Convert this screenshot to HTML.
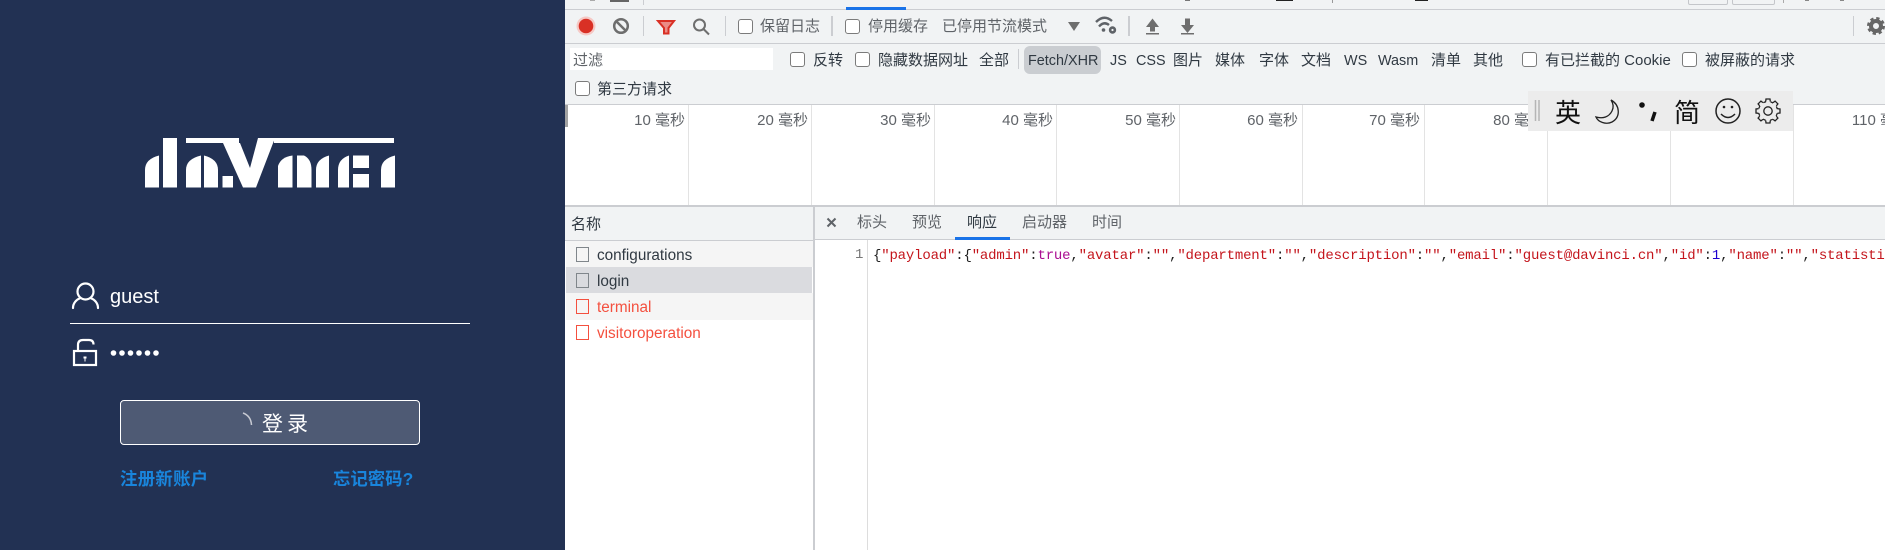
<!DOCTYPE html>
<html lang="zh"><head><meta charset="utf-8"><title>davinci</title>
<style>
html,body{margin:0;padding:0;width:1885px;height:550px;overflow:hidden;background:#fff}
body{position:relative;font-family:"Liberation Sans","Noto Sans CJK SC",sans-serif}
.a,.t,.r,.c{position:absolute;display:block}
.t,.r,.c{white-space:nowrap;font-size:15px;line-height:20px;height:20px;color:#303942}
.l{font-size:14.4px}
.n{font-size:15.3px}
.r{text-align:right;color:#5f6368;width:80px;top:111px}
.g{color:#5f6368}
.c{width:13px;height:13px;border:1.300px solid #7b7b7b;border-radius:3px;background:#fff;box-sizing:content-box}
svg{position:absolute;left:0;top:0;overflow:visible}
.line{position:absolute;top:105px;width:1px;height:100px;background:#e3e3e3}
pre{position:absolute;margin:0;left:873px;top:247px;font:14px/18px "Liberation Mono",monospace;letter-spacing:-.18px;color:#222;white-space:pre}
pre b{font-weight:normal;color:#c4151c}pre i{font-style:normal;color:#aa0d91}pre u{text-decoration:none;color:#1c00cf}
</style></head><body>

<!-- left login panel -->
<div class="a" style="left:0;top:0;width:565px;height:550px;background:#223153"></div>
<div class="a" style="left:120px;top:400px;width:298px;height:43px;border:1px solid #fff;border-radius:4px;background:#4e5a74"></div>
<svg width="565" height="550" viewBox="0 0 565 550">
<g fill="#fff">
<path d="M145 187.500V170Q145 159 159 155.500V187.500Z"/>
<rect x="163" y="138" width="14" height="49.500"/>
<rect x="186" y="138" width="53" height="5"/>
<path d="M186 187.500V170Q186 159 201 155.500V187.500Z"/>
<path d="M204 187.500V155.500Q218 159 218 170V187.500Z"/>
<rect x="222.500" y="176" width="10.500" height="11.500"/>
<path d="M223 143H240L250 168L258 138H275L256 187.500H243Z"/>
<rect x="274" y="138" width="120" height="5"/>
<path d="M278 187.500V166Q281 157 292.500 155.500V187.500Z"/>
<path d="M297 187.500V155.500H304Q311.500 159 311.500 170V187.500Z"/>
<path d="M316 187.500V170Q316 159 329 155.500V187.500Z"/>
<path d="M338 187.500V170Q338 159 349 155.500V187.500Z"/>
<path d="M353 155.500H369V168H353ZM353 174H369V187.500H353Z"/>
<path d="M381 187.500V170Q381 159 395 155.500V187.500Z"/>
</g>
<g fill="none" stroke="#fff" stroke-width="2.200">
<circle cx="85.500" cy="291.500" r="8"/>
<path d="M73 308C73 303 76.500 299.500 80.500 298M98 308C98 303 94.500 299.500 90.500 298" stroke-linecap="round"/>
<rect x="74" y="351" width="22" height="14"/>
<path d="M78 351V345Q78 340 83 340H89Q93.500 340 93.500 344.500"/>
</g>
<path d="M83.500 356.500h3v2h-1v3h-1v-3h-1z" fill="#fff"/>
<g fill="#fff"><circle cx="113.500" cy="353" r="2.800"/><circle cx="122" cy="353" r="2.800"/><circle cx="130.500" cy="353" r="2.800"/><circle cx="139" cy="353" r="2.800"/><circle cx="147.500" cy="353" r="2.800"/><circle cx="156" cy="353" r="2.800"/></g>
<rect x="70" y="323" width="400" height="1" fill="#fff"/>
<path d="M243 413Q251 416 251.500 425" fill="none" stroke="#c6c9d2" stroke-width="1.500"/>
</svg>
<span class="t" style="left:110px;top:286px;font-size:20px;line-height:22px;height:22px;color:#fff">guest</span>
<span class="t" style="left:262px;top:413px;font-size:21px;line-height:24px;height:24px;color:#fff;letter-spacing:4px">登录</span>
<span class="t" style="left:120px;top:468px;font-size:17.400px;line-height:22px;height:22px;color:#1985dc;font-weight:bold;letter-spacing:.3px">注册新账户</span>
<span class="t" style="left:333px;top:468px;font-size:17.400px;line-height:22px;height:22px;color:#1985dc;font-weight:bold">忘记密码?</span>

<!-- devtools chrome -->
<div class="a" style="left:565px;top:0;width:1320px;height:105px;background:#f1f3f4"></div>
<div class="a" style="left:565px;top:9px;width:1320px;height:1px;background:#cbcdd1"></div>
<div class="a" style="left:846px;top:7px;width:60px;height:3px;background:#1a73e8"></div>
<div class="a" style="left:565px;top:43px;width:1320px;height:1px;background:#cbcdd1"></div>
<div class="a" style="left:565px;top:104px;width:1320px;height:1px;background:#cbcdd1"></div>

<!-- clipped top strip bits -->
<div class="a" style="left:610px;top:0;width:19px;height:2px;background:#666"></div>
<div class="a" style="left:590px;top:0;width:5px;height:1px;background:#aaa"></div>
<div class="a" style="left:643px;top:0;width:1px;height:5px;background:#cbcdd1"></div>
<div class="a" style="left:1185px;top:0;width:5px;height:1px;background:#777"></div>
<div class="a" style="left:1276px;top:0;width:17px;height:1px;background:#222"></div>
<div class="a" style="left:1332px;top:0;width:1px;height:3px;background:#999"></div>
<div class="a" style="left:1415px;top:0;width:13px;height:1px;background:#222"></div>
<div class="a" style="left:1688px;top:-3px;width:38px;height:6px;border:1px solid #c4c6ca;border-radius:2px"></div>
<div class="a" style="left:1732px;top:-3px;width:41px;height:6px;border:1px solid #c4c6ca;border-radius:2px"></div>
<div class="a" style="left:1783px;top:0;width:1px;height:3px;background:#aaa"></div>
<div class="a" style="left:1805px;top:0;width:4px;height:1px;background:#888"></div>
<div class="a" style="left:1840px;top:0;width:4px;height:1px;background:#888"></div>

<!-- toolbar dividers -->
<div class="a" style="left:643px;top:16px;width:1px;height:20px;background:#cbcdd1"></div>
<div class="a" style="left:725px;top:16px;width:1px;height:20px;background:#cbcdd1"></div>
<div class="a" style="left:831px;top:16px;width:2px;height:20px;background:#cbcdd1"></div>
<div class="a" style="left:1128px;top:16px;width:2px;height:20px;background:#cbcdd1"></div>
<div class="a" style="left:1853px;top:16px;width:1px;height:20px;background:#cbcdd1"></div>

<!-- toolbar icons -->
<svg width="1885" height="550" viewBox="0 0 1885 550" style="z-index:2">
<circle cx="586" cy="26" r="9.500" fill="#f6c9c5"/><circle cx="586" cy="26" r="7.300" fill="#d93025"/>
<g fill="none" stroke="#6e6e6e" stroke-width="2.500"><circle cx="621" cy="26" r="6.800"/><path d="M616.500 21.500L625.500 30.500"/></g>
<path d="M658 21H674L668.500 28V33.500H664V28Z" fill="#eb8c86" stroke="#d93025" stroke-width="2"/>
<g fill="none" stroke="#6e6e6e" stroke-width="2"><circle cx="699.500" cy="25" r="5.500"/><path d="M703.500 29L709 34.500"/></g>
<path d="M1068 22H1080L1074 31Z" fill="#6e6e6e"/>
<g fill="none" stroke="#5f6368" stroke-width="2.400"><path d="M1096 22Q1104 14 1112 21"/><path d="M1099 26.500Q1104 21 1109 25"/></g>
<circle cx="1103.500" cy="30" r="1.800" fill="#5f6368"/>
<circle cx="1112.500" cy="30" r="2.400" fill="none" stroke="#5f6368" stroke-width="2.600"/>
<path d="M1146 27L1152.500 18.500L1159 27H1155V31.500H1150V27Z" fill="#6e6e6e"/><rect x="1146" y="33" width="13" height="1.500" fill="#6e6e6e"/>
<path d="M1181 25L1187.500 33L1194 25H1190V18.500H1185V25Z" fill="#6e6e6e"/><rect x="1181" y="33" width="13" height="1.500" fill="#6e6e6e"/>
<g fill="none" stroke="#666"><circle cx="1876" cy="26" r="5" stroke-width="4"/><circle cx="1876" cy="26" r="7.500" stroke-width="3" stroke-dasharray="3.200 2.690"/></g>
</svg>

<!-- toolbar text -->
<span class="c" style="left:738px;top:19px"></span><span class="t g" style="left:760px;top:17px">保留日志</span>
<span class="c" style="left:845px;top:19px"></span><span class="t g" style="left:868px;top:17px">停用缓存</span>
<span class="t g" style="left:942px;top:17px">已停用节流模式</span>

<!-- filter row -->
<div class="a" style="left:570px;top:48px;width:203px;height:22px;background:#fff"></div>
<span class="t g" style="left:573px;top:51px">过滤</span>
<span class="c" style="left:790px;top:52px"></span><span class="t" style="left:813px;top:51px">反转</span>
<span class="c" style="left:855px;top:52px"></span><span class="t" style="left:878px;top:51px">隐藏数据网址</span>
<span class="t" style="left:979px;top:51px">全部</span>
<div class="a" style="left:1018px;top:49px;width:1px;height:20px;background:#cbcdd1"></div>
<div class="a" style="left:1024px;top:46px;width:77px;height:28px;border-radius:6px;background:#cacdd1"></div>
<span class="t l" style="left:1028px;top:51px">Fetch/XHR</span>
<span class="t l" style="left:1110px;top:51px">JS</span>
<span class="t l" style="left:1136px;top:51px">CSS</span>
<span class="t" style="left:1173px;top:51px">图片</span>
<span class="t" style="left:1215px;top:51px">媒体</span>
<span class="t" style="left:1259px;top:51px">字体</span>
<span class="t" style="left:1301px;top:51px">文档</span>
<span class="t l" style="left:1344px;top:51px">WS</span>
<span class="t l" style="left:1378px;top:51px">Wasm</span>
<span class="t" style="left:1431px;top:51px">清单</span>
<span class="t" style="left:1473px;top:51px">其他</span>
<span class="c" style="left:1522px;top:52px"></span><span class="t" style="left:1545px;top:51px">有已拦截的 Cookie</span>
<span class="c" style="left:1682px;top:52px"></span><span class="t" style="left:1705px;top:51px">被屏蔽的请求</span>
<span class="c" style="left:575px;top:81px"></span><span class="t" style="left:597px;top:80px">第三方请求</span>

<!-- timeline -->
<div class="a" style="left:565px;top:105px;width:3px;height:22px;background:#a3a3a3"></div>
<i class="line" style="left:688px"></i><i class="line" style="left:811px"></i><i class="line" style="left:934px"></i><i class="line" style="left:1056px"></i><i class="line" style="left:1179px"></i><i class="line" style="left:1302px"></i><i class="line" style="left:1424px"></i><i class="line" style="left:1547px"></i><i class="line" style="left:1670px"></i><i class="line" style="left:1793px"></i>
<span class="r" style="left:605px">10 毫秒</span><span class="r" style="left:728px">20 毫秒</span><span class="r" style="left:851px">30 毫秒</span><span class="r" style="left:973px">40 毫秒</span><span class="r" style="left:1096px">50 毫秒</span><span class="r" style="left:1218px">60 毫秒</span><span class="r" style="left:1340px">70 毫秒</span><span class="r" style="left:1464px">80 毫秒</span><span class="r" style="left:1586px">90 毫秒</span><span class="r" style="left:1710px">100 毫秒</span><span class="r" style="left:1830px">110 毫秒</span>

<!-- bottom split -->
<div class="a" style="left:565px;top:205px;width:1320px;height:2px;background:#cbcdd1"></div>
<div class="a" style="left:565px;top:207px;width:248px;height:33px;background:#f1f3f4"></div>
<div class="a" style="left:565px;top:240px;width:248px;height:1px;background:#cbcdd1"></div>
<div class="a" style="left:813px;top:207px;width:2px;height:343px;background:#cbcdd1"></div>
<span class="t" style="left:571px;top:215px">名称</span>
<div class="a" style="left:566px;top:241px;width:247px;height:26px;background:#f5f5f5"></div>
<div class="a" style="left:566px;top:267px;width:246px;height:26px;background:#dadbdf"></div>
<div class="a" style="left:566px;top:293px;width:247px;height:27px;background:#f5f5f5"></div>
<span class="a" style="left:576px;top:247px;width:11px;height:13px;border:1.500px solid #80868b"></span>
<span class="a" style="left:576px;top:273px;width:11px;height:13px;border:1.500px solid #80868b"></span>
<span class="a" style="left:576px;top:299px;width:11px;height:13px;border:1.500px solid #f4503f"></span>
<span class="a" style="left:576px;top:325px;width:11px;height:13px;border:1.500px solid #f4503f"></span>
<span class="t n" style="left:597px;top:246px">configurations</span>
<span class="t n" style="left:597px;top:272px">login</span>
<span class="t n" style="left:597px;top:298px;color:#f4503f">terminal</span>
<span class="t n" style="left:597px;top:324px;color:#f4503f">visitoroperation</span>

<!-- detail tabs -->
<div class="a" style="left:815px;top:207px;width:1070px;height:32px;background:#f1f3f4"></div>
<div class="a" style="left:815px;top:239px;width:1070px;height:1px;background:#cbcdd1"></div>
<div class="a" style="left:955px;top:237px;width:55px;height:3px;background:#1a73e8"></div>
<svg width="1885" height="550" viewBox="0 0 1885 550"><path d="M827.500 218.500L835.500 226.500M835.500 218.500L827.500 226.500" stroke="#5f6368" stroke-width="2" fill="none"/></svg>
<span class="t g" style="left:857px;top:213px">标头</span>
<span class="t g" style="left:912px;top:213px">预览</span>
<span class="t" style="left:967px;top:213px">响应</span>
<span class="t g" style="left:1022px;top:213px">启动器</span>
<span class="t g" style="left:1092px;top:213px">时间</span>

<!-- code -->
<div class="a" style="left:867px;top:240px;width:1px;height:310px;background:#ddd"></div>
<span class="t" style="left:855px;top:246px;font:14px/18px 'Liberation Mono',monospace;color:#777">1</span>
<pre>{<b>"payload"</b>:{<b>"admin"</b>:<i>true</i>,<b>"avatar"</b>:<b>""</b>,<b>"department"</b>:<b>""</b>,<b>"description"</b>:<b>""</b>,<b>"email"</b>:<b>"guest@davinci.cn"</b>,<b>"id"</b>:<u>1</u>,<b>"name"</b>:<b>""</b>,<b>"statistics"</b></pre>

<!-- IME bar -->
<div class="a" style="left:1528px;top:91px;width:265px;height:40px;background:#ececec;z-index:3"></div>
<svg width="1885" height="550" viewBox="0 0 1885 550" style="z-index:4">
<path d="M1535.500 100V121M1539 100V121" stroke="#b5b5b5" stroke-width="1.500"/>
<path d="M1611 100C1620 105 1621 117 1612 122C1606 125 1598 122 1596 117C1603 119 1609 117 1612 111C1614 107 1613 103 1611 100Z" fill="none" stroke="#222" stroke-width="1.300"/>
<circle cx="1642" cy="105" r="2.800" fill="#111"/>
<path d="M1655 112L1652 121" stroke="#111" stroke-width="3.500"/>
<g fill="none" stroke="#222" stroke-width="1.500"><circle cx="1728" cy="111" r="12"/><path d="M1721 114Q1728 121 1735 114"/></g>
<circle cx="1724" cy="107" r="1.300" fill="#222"/><circle cx="1732" cy="107" r="1.300" fill="#222"/>
<g transform="translate(1768 111)" fill="none" stroke="#222" stroke-width="1.300">
<circle r="9.500" stroke-dasharray="2.860 4.600" stroke-dashoffset="-2.300"/>
<circle r="4.200"/>
<path d="M9.500 -2.300L12 -2V2L9.500 2.300"/>
<path transform="rotate(45)" d="M9.500 -2.300L12 -2V2L9.500 2.300"/><path transform="rotate(90)" d="M9.500 -2.300L12 -2V2L9.500 2.300"/><path transform="rotate(135)" d="M9.500 -2.300L12 -2V2L9.500 2.300"/><path transform="rotate(180)" d="M9.500 -2.300L12 -2V2L9.500 2.300"/><path transform="rotate(225)" d="M9.500 -2.300L12 -2V2L9.500 2.300"/><path transform="rotate(270)" d="M9.500 -2.300L12 -2V2L9.500 2.300"/><path transform="rotate(315)" d="M9.500 -2.300L12 -2V2L9.500 2.300"/>
</g>
</svg>
<span class="t" style="left:1555px;top:100px;font-size:26px;line-height:26px;height:26px;color:#111;z-index:5">英</span>
<span class="t" style="left:1674px;top:100px;font-size:26px;line-height:26px;height:26px;color:#111;z-index:5">简</span>
</body></html>
